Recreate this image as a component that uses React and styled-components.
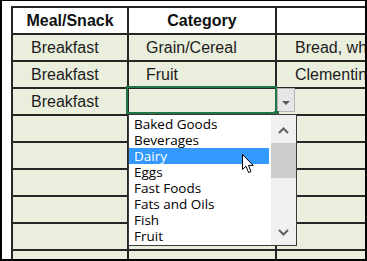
import React from "react";
import styled, { createGlobalStyle, css } from "styled-components";

const GlobalStyle = createGlobalStyle`
  html, body { margin: 0; padding: 0; background: #fff; }
  * { box-sizing: border-box; }
`;

const Frame = styled.div`
  position: relative;
  width: 367px;
  height: 261px;
  border: 2px solid #000;
  border-top-width: 1px;
  background: #fff;
  overflow: hidden;
  padding: 5px 0 0 9px;
`;

const Sheet = styled.div`
  display: grid;
  grid-template-columns: 114px 146px 120px;
  grid-auto-rows: 25px;
  gap: 2px;
  padding: 2px;
  background: #262626;
  width: max-content;
`;

const HeaderCell = styled.div`
  background: #fff;
  display: flex;
  align-items: center;
  justify-content: center;
  font-family: "Liberation Sans", Arial, sans-serif;
  font-weight: 700;
  font-size: 16px;
  color: #111;
`;

const Cell = styled.div`
  position: relative;
  background: #eaeedd;
  display: flex;
  align-items: center;
  padding-left: ${(p) => p.$indent ?? 18}px;
  font-family: "Liberation Sans", Arial, sans-serif;
  font-size: 16px;
  color: #1c1c1c;
  white-space: nowrap;
  ${(p) =>
    p.$selected &&
    css`
      z-index: 3;
      &::after {
        content: "";
        position: absolute;
        top: -3px;
        left: -3px;
        right: -2px;
        bottom: 0;
        border: 2px solid #227447;
        pointer-events: none;
      }
    `}
`;

const FillHandle = styled.span`
  position: absolute;
  right: -4px;
  bottom: -1px;
  width: 5px;
  height: 4px;
  background: #227447;
  z-index: 4;
`;

const DropButton = styled.div`
  position: absolute;
  top: -1px;
  left: 148px;
  width: 18px;
  height: 24px;
  background: #e6e6e6;
  border: 1px solid #b4b4b4;
  display: flex;
  align-items: center;
  justify-content: center;
  padding-top: 5px;
`;

const Triangle = styled.span`
  width: 0;
  height: 0;
  border-left: 4px solid transparent;
  border-right: 4px solid transparent;
  border-top: 4px solid #5a5a5a;
`;

const List = styled.div`
  position: absolute;
  top: 25px;
  left: -1px;
  width: 169px;
  height: 132px;
  background: #fff;
  border: 1px solid #3a3a3a;
  display: flex;
  z-index: 5;
`;

const Items = styled.div`
  flex: 1;
  padding: 1px 2px 0 0;
  display: flex;
  flex-direction: column;
`;

const Item = styled.div`
  height: 16px;
  line-height: 16px;
  overflow: hidden;
  padding-left: 5px;
  font-family: "Open Sans", "Noto Sans", sans-serif;
  font-size: 13.5px;
  color: ${(p) => (p.$active ? "#fff" : "#000")};
  background: ${(p) => (p.$active ? "#3399ff" : "transparent")};
`;

const Scrollbar = styled.div`
  width: 25px;
  background: #f0f0f0;
  display: flex;
  flex-direction: column;
`;

const ArrowBox = styled.div`
  height: 28px;
  display: flex;
  align-items: center;
  justify-content: center;
  padding-top: ${(p) => p.$pt || 0}px;
`;

const Thumb = styled.div`
  height: 35px;
  background: #cdcdcd;
`;

const Track = styled.div`
  flex: 1;
`;

const Cursor = styled.svg`
  position: absolute;
  left: 240px;
  top: 153px;
  z-index: 10;
`;

const Chevron = ({ up }) => (
  <svg width="11" height="7" viewBox="0 0 11 7">
    <polyline
      points={up ? "1,6 5.5,1.5 10,6" : "1,1 5.5,5.5 10,1"}
      fill="none"
      stroke="#606060"
      strokeWidth="2"
    />
  </svg>
);

const categories = [
  "Baked Goods",
  "Beverages",
  "Dairy",
  "Eggs",
  "Fast Foods",
  "Fats and Oils",
  "Fish",
  "Fruit",
];

const rows = [
  ["Breakfast", "Grain/Cereal", "Bread, whole wheat"],
  ["Breakfast", "Fruit", "Clementine"],
  ["Breakfast", "", ""],
  ["", "", ""],
  ["", "", ""],
  ["", "", ""],
  ["", "", ""],
  ["", "", ""],
  ["", "", ""],
];

export default function App() {
  return (
    <>
      <GlobalStyle />
      <Frame>
        <Sheet>
          <HeaderCell>Meal/Snack</HeaderCell>
          <HeaderCell>Category</HeaderCell>
          <HeaderCell />
          {rows.map((r, i) => (
            <React.Fragment key={i}>
              <Cell>{r[0]}</Cell>
              {i === 2 ? (
                <Cell $selected $indent={17}>
                  <FillHandle />
                  <DropButton>
                    <Triangle />
                  </DropButton>
                  <List>
                    <Items>
                      {categories.map((c) => (
                        <Item key={c} $active={c === "Dairy"}>
                          {c}
                        </Item>
                      ))}
                    </Items>
                    <Scrollbar>
                      <ArrowBox $pt={2}>
                        <Chevron up />
                      </ArrowBox>
                      <Thumb />
                      <Track />
                      <ArrowBox $pt={2}>
                        <Chevron />
                      </ArrowBox>
                    </Scrollbar>
                  </List>
                </Cell>
              ) : (
                <Cell $indent={17}>{r[1]}</Cell>
              )}
              <Cell>{r[2]}</Cell>
            </React.Fragment>
          ))}
        </Sheet>
        <Cursor width="13" height="20" viewBox="0 0 13 20">
          <path
            d="M0.5 0.5 L0.5 15.5 L4 12.2 L6.6 18.6 L9 17.6 L6.5 11.4 L11.2 11.4 Z"
            fill="#fff"
            stroke="#000"
            strokeWidth="1"
            strokeLinejoin="miter"
          />
        </Cursor>
      </Frame>
    </>
  );
}
